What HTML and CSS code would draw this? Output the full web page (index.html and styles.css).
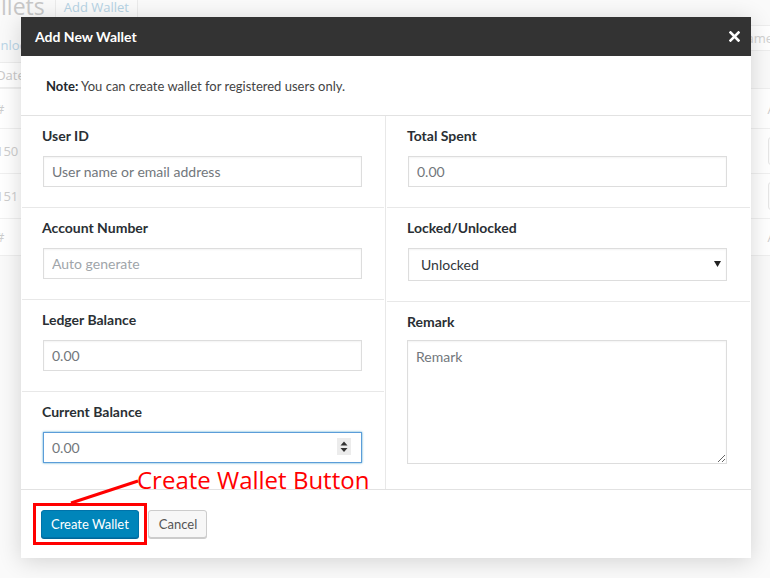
FILE: index.html
```html
<!DOCTYPE html>
<html lang="en">
<head>
<meta charset="utf-8">
<title>Add New Wallet</title>
<link rel="stylesheet" href="styles.css">
</head>
<body>
<div class="page">
  <div class="heading">
    <h1 class="title">Wallets</h1>
    <span class="add-btn">Add Wallet</span>
  </div>
  <div class="filters">
    <span class="views">Unlocked (2)</span>
    <span class="search">Username</span>
  </div>
  <div class="tablenav"><span class="date-box">All Dates</span></div>
  <table class="list">
    <colgroup><col class="col-a"><col class="col-b"></colgroup>
    <thead><tr><th>#</th><th>Action</th></tr></thead>
    <tbody>
      <tr><td>150</td><td><span class="rbtn">Edit</span></td></tr>
      <tr><td>151</td><td><span class="rbtn">Edit</span></td></tr>
    </tbody>
    <tfoot><tr><th>#</th><th>Action</th></tr></tfoot>
  </table>
</div>

<div class="modal">
  <div class="modal-head">
    <span class="modal-title">Add New Wallet</span>
    <svg class="close" width="11" height="11" viewBox="0 0 11 11"><path d="M1.5 1.5 L9.5 9.5 M9.5 1.5 L1.5 9.5" stroke="#fff" stroke-width="2.6" stroke-linecap="square"/></svg>
  </div>
  <div class="note"><b>Note:</b>&nbsp;You can create wallet for registered users only.</div>
  <div class="cols">
    <div class="col col-left">
      <div class="row">
        <div class="label">User ID</div>
        <input class="field" type="text" placeholder="User name or email address">
      </div>
      <div class="row">
        <div class="label">Account Number</div>
        <input class="field field-auto" type="text" placeholder="Auto generate">
      </div>
      <div class="row">
        <div class="label">Ledger Balance</div>
        <input class="field" type="text" placeholder="0.00">
      </div>
      <div class="row last">
        <div class="label">Current Balance</div>
        <div class="num-wrap">
          <input class="field field-focus" type="text" placeholder="0.00">
          <svg class="spinner" width="14" height="17" viewBox="0 0 14 17"><rect width="14" height="17" fill="#ececec"/><polygon points="3.5,7.5 7,3.5 10.5,7.5" fill="#333"/><polygon points="3.5,10 7,14 10.5,10" fill="#333"/></svg>
        </div>
      </div>
    </div>
    <div class="col col-right">
      <div class="row">
        <div class="label">Total Spent</div>
        <input class="field" type="text" placeholder="0.00">
      </div>
      <div class="row">
        <div class="label">Locked/Unlocked</div>
        <div class="sel-wrap">
          <select class="select"><option>Unlocked</option><option>Locked</option></select>
          <svg class="sel-arrow" width="7" height="6" viewBox="0 0 7 6"><polygon points="0,0 7,0 3.5,6" fill="#222"/></svg>
        </div>
      </div>
      <div class="row last">
        <div class="label label-tight">Remark</div>
        <textarea class="area" placeholder="Remark"></textarea>
      </div>
    </div>
  </div>
  <div class="footer">
    <button class="btn btn-primary" type="button">Create Wallet</button>
    <button class="btn btn-secondary" type="button">Cancel</button>
  </div>
</div>

<svg class="annot-line" width="770" height="578" viewBox="0 0 770 578"><line x1="71" y1="503" x2="138" y2="481" stroke="#f00" stroke-width="3"/></svg>
<div class="annot-box"></div>
<div class="annot-text">Create Wallet Button</div>
</body>
</html>
```

FILE: styles.css
```css
html, body {
  margin: 0;
  padding: 0;
  width: 770px;
  height: 578px;
  overflow: hidden;
}
body {
  position: relative;
  background: #fafafa;
  font-family: "Open Sans", "Liberation Sans", sans-serif;
}

/* ---------- faded background page ---------- */
.page {
  color: #cfcfcf;
  font-size: 13px;
}
.heading {
  display: flex;
  align-items: flex-start;
  margin-top: -8px;
  height: 29px;
}
.title {
  margin: 0 0 0 -33px;
  font-size: 23px;
  line-height: 29px;
  font-weight: 400;
  color: #c8c8c8;
}
.add-btn {
  margin: 4px 0 0 10px;
  height: 22px;
  line-height: 20px;
  box-sizing: border-box;
  padding: 0 8px;
  border: 1px solid #ebebeb;
  background: #fbfbfb;
  color: #b6d3e5;
}
.filters {
  display: flex;
  justify-content: space-between;
  align-items: flex-end;
  margin-top: 4px;
  height: 26px;
}
.views {
  margin-left: -9px;
  line-height: 14px;
  margin-bottom: -1px;
  color: #b9d5e7;
}
.search {
  width: 90px;
  height: 26px;
  box-sizing: border-box;
  border: 1px solid #eeeeee;
  background: #fff;
  line-height: 24px;
  text-align: right;
  padding-right: 8px;
  margin-right: -12px;
  align-self: stretch;
  color: #d2d2d2;
}
.tablenav {
  margin-top: 11px;
  height: 26px;
}
.date-box {
  display: inline-block;
  margin-left: -31px;
  height: 26px;
  line-height: 24px;
  box-sizing: border-box;
  padding: 0 8px;
  border: 1px solid #ededed;
  background: #fff;
  color: #c9c9c9;
}
.list {
  margin-left: -13px;
  width: 830px;
  table-layout: fixed;
  border-collapse: collapse;
  background: #fff;
  border: 1px solid #efefef;
}
.col-a { width: 772px; }
.list th, .list td {
  text-align: left;
  font-weight: 400;
  padding: 0 8px;
  color: #cdcdcd;
  border-bottom: 1px solid #f0f0f0;
}
.list thead th { height: 39px; }
.list tbody td { height: 44px; }
.list tfoot th { height: 36px; border-bottom: none; }
.rbtn {
  display: inline-block;
  height: 28px;
  line-height: 26px;
  box-sizing: border-box;
  padding: 0 8px;
  border: 1px solid #e6e6e6;
  border-radius: 3px;
  background: #fbfbfb;
}

/* ---------- modal ---------- */
.modal {
  position: absolute;
  left: 21px;
  top: 17px;
  width: 730px;
  height: 541px;
  background: #fff;
  box-shadow: 0 3px 22px rgba(0, 0, 0, 0.16);
  display: flex;
  flex-direction: column;
  font-family: Lato, "Open Sans", sans-serif;
  color: #32373c;
}
.modal-head {
  flex: none;
  height: 39px;
  background: #333333;
  display: flex;
  align-items: center;
  justify-content: space-between;
  padding: 0 11px 0 14px;
}
.modal-title {
  color: #fff;
  font-weight: 700;
  font-size: 14px;
}
.close { display: block; }
.note {
  flex: none;
  height: 59px;
  border-bottom: 1px solid #e2e2e2;
  display: flex;
  align-items: center;
  padding-left: 25px;
  font-size: 13px;
  color: #444;
}
.note b { color: #23282d; font-weight: 700; }
.cols {
  flex: 1;
  display: grid;
  grid-template-columns: 1fr 1fr;
}
.col-left { border-right: 1px solid #e8e8e8; }
.row {
  margin: 0 1px;
  padding: 10px 0 20px 20px;
  border-bottom: 1px solid #e8e8e8;
}
.row.last { border-bottom: none; }
.label {
  font-weight: 700;
  font-size: 14px;
  line-height: 20px;
  margin-bottom: 10px;
  color: #2a2f34;
}
.label-tight { margin-bottom: 8px; }
.field {
  display: block;
  box-sizing: border-box;
  width: 319px;
  height: 31px;
  margin: 0 0 0 1px;
  padding: 0 8px;
  border: 1px solid #dddddd;
  box-shadow: inset 0 1px 2px rgba(0, 0, 0, 0.05);
  background: #fff;
  font-family: Lato, "Open Sans", sans-serif;
  font-size: 14px;
  color: #32373c;
  outline: none;
}
.field::placeholder { color: #72777c; }
.field-auto::placeholder { color: #a0a5aa; }
.field-focus {
  border-color: #5b9dd9;
  box-shadow: 0 0 2px rgba(30, 140, 190, 0.8);
}
.num-wrap, .sel-wrap {
  position: relative;
  width: 320px;
}
.spinner {
  position: absolute;
  left: 295px;
  top: 6px;
}
.select {
  display: block;
  box-sizing: border-box;
  width: 319px;
  height: 33px;
  margin: 0 0 0 1px;
  padding: 0 12px;
  border: 1px solid #dddddd;
  border-radius: 0;
  background: #fff;
  appearance: none;
  -webkit-appearance: none;
  font-family: Lato, "Open Sans", sans-serif;
  font-size: 14px;
  color: #32373c;
  box-shadow: inset 0 1px 2px rgba(0, 0, 0, 0.05);
}
.sel-arrow {
  position: absolute;
  left: 307px;
  top: 13px;
}
.area {
  display: block;
  box-sizing: border-box;
  width: 320px;
  height: 124px;
  margin: 0;
  padding: 6px 8px 5px;
  border: 1px solid #dddddd;
  font-family: Lato, "Open Sans", sans-serif;
  font-size: 14px;
  line-height: 20px;
  color: #32373c;
  box-shadow: inset 0 1px 2px rgba(0, 0, 0, 0.05);
  outline: none;
}
.area::placeholder { color: #72777c; }
.footer {
  flex: none;
  height: 69px;
  box-sizing: border-box;
  border-top: 1px solid #e2e2e2;
  padding: 20px 0 0 20px;
  display: flex;
  align-items: flex-start;
  gap: 9px;
}
.btn {
  height: 28px;
  box-sizing: border-box;
  border-radius: 3px;
  font-family: Lato, "Open Sans", sans-serif;
  font-size: 13px;
  line-height: 26px;
  cursor: pointer;
}
.btn-primary {
  padding: 0 9px;
  background: #0085ba;
  border: 1px solid #0073aa;
  box-shadow: 0 1px 0 #006799;
  color: #fff;
}
.btn-secondary {
  padding: 0 9px 0 10px;
  background: #f7f7f7;
  border: 1px solid #cccccc;
  box-shadow: 0 1px 0 #cccccc;
  color: #555;
}

/* ---------- annotation overlay ---------- */
.annot-line {
  position: absolute;
  left: 0;
  top: 0;
  pointer-events: none;
}
.annot-box {
  position: absolute;
  left: 33px;
  top: 503px;
  width: 114px;
  height: 42px;
  box-sizing: border-box;
  border: 3px solid #f00;
}
.annot-text {
  position: absolute;
  left: 137px;
  top: 468px;
  font-family: "Open Sans", "Liberation Sans", sans-serif;
  font-size: 24px;
  line-height: 24px;
  color: #f00;
  white-space: nowrap;
}
```
